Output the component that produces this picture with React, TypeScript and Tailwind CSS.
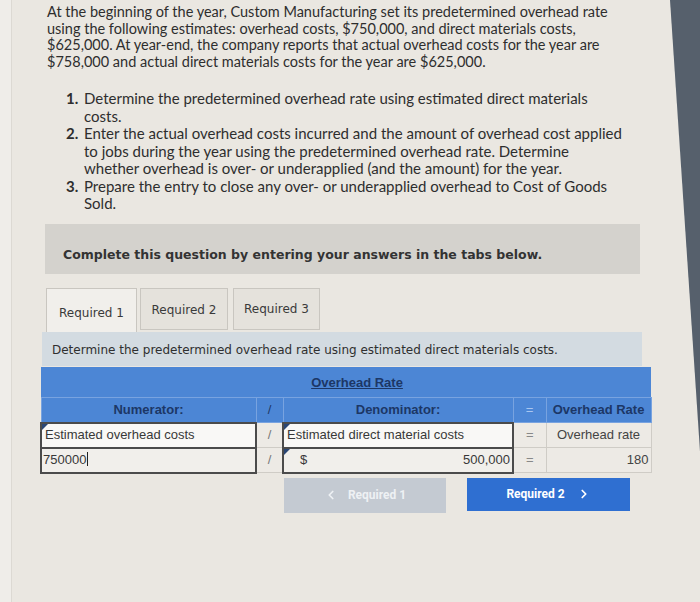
import { ChevronLeft, ChevronRight } from "lucide-react";

const Marker = () => (
  <span className="absolute left-0 top-0 h-0 w-0 border-r-[6px] border-t-[6px] border-r-transparent border-t-[#2a4674]" />
);

const tasks = [
  "Determine the predetermined overhead rate using estimated direct materials costs.",
  "Enter the actual overhead costs incurred and the amount of overhead cost applied to jobs during the year using the predetermined overhead rate. Determine whether overhead is over- or underapplied (and the amount) for the year.",
  "Prepare the entry to close any over- or underapplied overhead to Cost of Goods Sold.",
];

export default function App() {
  return (
    <div className="flex h-[602px] w-[700px] overflow-hidden bg-[#eae7e1] text-[#2e2e2e]">
      <div className="w-[12px] shrink-0 border-r border-[#dcd9d3] bg-[#efede9]" />

      <main className="flex-1 pl-[35px] pt-[4px]">
        <p className="w-[585px] font-['Lato',sans-serif] text-[14.5px] leading-[16.5px]">
          At the beginning of the year, Custom Manufacturing set its predetermined overhead rate
          using the following estimates: overhead costs, $750,000, and direct materials costs,
          $625,000. At year-end, the company reports that actual overhead costs for the year are
          $758,000 and actual direct materials costs for the year are $625,000.
        </p>

        <ol className="ml-[19px] mt-[20px] w-[558px] font-['Lato',sans-serif] text-[15px] leading-[17.5px]">
          {tasks.map((t, i) => (
            <li key={i} className="flex">
              <span className="w-[18px] shrink-0 font-bold">{i + 1}.</span>
              <span>{t}</span>
            </li>
          ))}
        </ol>

        <div className="-ml-[2px] mt-[11px] h-[50px] w-[595px] bg-[#d4d2cd] pl-[18px] pt-[23px] font-['DejaVu_Sans',sans-serif] text-[12.5px] font-bold leading-[16px] text-[#333]">
          Complete this question by entering your answers in the tabs below.
        </div>

        <div className="-ml-[1px] mt-[14px] flex items-start font-['DejaVu_Sans',sans-serif] text-[12px] text-[#3a3a3a]">
          <div className="flex h-[44px] w-[91px] items-center justify-center border border-b-0 border-[#c9c6c0] bg-[#f1efeb] pt-[6px]">
            Required 1
          </div>
          <div className="ml-[3px] flex h-[42px] w-[88px] items-center justify-center border border-[#c9c6c0] bg-[#e5e2dc] pt-[2px]">
            Required 2
          </div>
          <div className="ml-[5px] flex h-[42px] w-[87px] items-center justify-center border border-[#c9c6c0] bg-[#e5e2dc]">
            Required 3
          </div>
        </div>

        <div className="-ml-[5px] flex h-[34px] w-[600px] items-center bg-[#d3dbe1] pl-[10px] pt-[2px] font-['DejaVu_Sans',sans-serif] text-[12px] text-[#2f2f2f]">
          Determine the predetermined overhead rate using estimated direct materials costs.
        </div>

        <table className="-ml-[7px] mt-[1px] w-[610px] table-fixed border-collapse font-['Liberation_Sans',Arial,sans-serif] text-[13px]">
          <colgroup>
            <col className="w-[215px]" />
            <col className="w-[27px]" />
            <col className="w-[230px]" />
            <col className="w-[33px]" />
            <col className="w-[105px]" />
          </colgroup>
          <tbody>
            <tr className="h-[31px] bg-[#4c86d5]">
              <td colSpan={5} className="pl-[22px] pt-[2px] text-center font-bold text-[#1c3766] underline">
                Overhead Rate
              </td>
            </tr>
            <tr className="h-[25px] bg-[#4c86d5] text-[#1c3766]">
              <td className="border border-[#78a3e0] text-center font-bold">Numerator:</td>
              <td className="border border-[#78a3e0] text-center">/</td>
              <td className="border border-[#78a3e0] text-center font-bold">Denominator:</td>
              <td className="border border-[#78a3e0] text-center text-[#a9c6f0]">=</td>
              <td className="border border-[#78a3e0] text-center font-bold">Overhead Rate</td>
            </tr>
            <tr className="h-[25px] text-[#383838]">
              <td className="relative border-2 border-[#4b4b4b] bg-[#f9f8f6] pl-[3px]">
                <Marker />
                Estimated overhead costs
              </td>
              <td className="border border-[#cfccc6] bg-[#edeae5] text-center text-[#777]">/</td>
              <td className="relative border-2 border-[#4b4b4b] bg-[#f9f8f6] pl-[3px]">
                <Marker />
                Estimated direct material costs
              </td>
              <td className="border border-[#cfccc6] bg-[#edeae5] text-center text-[#888]">=</td>
              <td className="border border-[#cfccc6] bg-[#edeae5] text-center text-[#444]">Overhead rate</td>
            </tr>
            <tr className="h-[25px] text-[#383838]">
              <td className="border-2 border-[#4b4b4b] bg-[#f1efeb] pl-[1px]">
                750000<span className="ml-[1px] inline-block h-[14px] w-[1px] translate-y-[2px] bg-[#222]" />
              </td>
              <td className="border border-[#cfccc6] bg-[#edeae5] text-center text-[#777]">/</td>
              <td className="relative border-2 border-[#4b4b4b] bg-[#f1efeb]">
                <Marker />
                <div className="flex justify-between pl-[16px] pr-[2px]">
                  <span>$</span>
                  <span>500,000</span>
                </div>
              </td>
              <td className="border border-[#cfccc6] bg-[#edeae5] text-center text-[#888]">=</td>
              <td className="border border-[#cfccc6] bg-[#edeae5] pr-[2px] text-right text-[#444]">180</td>
            </tr>
          </tbody>
        </table>

        <div className="ml-[237px] mt-[4px] flex gap-[21px] font-['Roboto',sans-serif] text-[12px] font-bold">
          <button className="flex h-[35px] w-[162px] items-center justify-center gap-[10px] bg-[#c4cad2] text-[#eef1f4]">
            <ChevronLeft size={14} strokeWidth={3} />
            Required 1
          </button>
          <button className="flex h-[33px] w-[163px] items-center justify-center gap-[12px] bg-[#2f6fd1] text-white">
            Required 2
            <ChevronRight size={14} strokeWidth={3} />
          </button>
        </div>
      </main>

      <div className="w-[30px] shrink-0 bg-[#56606c] [clip-path:polygon(0_0,100%_0,100%_75%)]" />
    </div>
  );
}
